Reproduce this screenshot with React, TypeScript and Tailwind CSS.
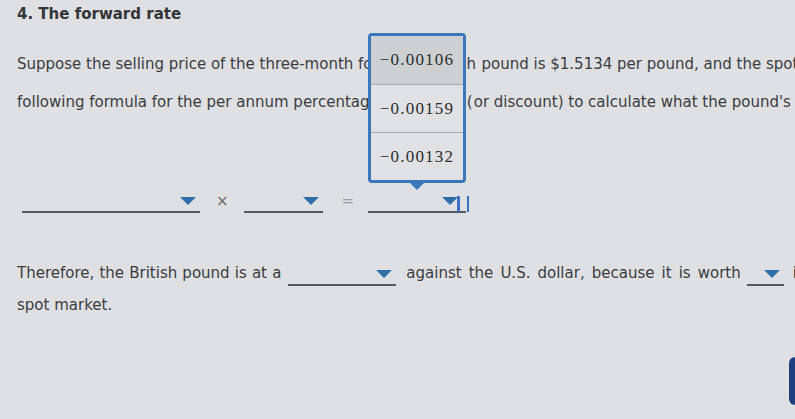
import React from "react";

const Caret = () => (
  <span className="inline-block h-0 w-0 border-x-[8px] border-t-[8px] border-x-transparent border-t-[#2f6ea8]" />
);

const Blank: React.FC<{ width: string; pad?: string }> = ({ width, pad = "pr-[4px]" }) => (
  <span className={`inline-flex h-[22px] shrink-0 items-center justify-end border-b-2 border-[#555a60] ${pad} ${width}`}>
    <Caret />
  </span>
);

const options = ["\u22120.00106", "\u22120.00159", "\u22120.00132"];

const App: React.FC = () => {
  return (
    <div className="relative flex h-[419px] w-[795px] flex-col overflow-hidden bg-[#dee0e3] font-['DejaVu_Sans',sans-serif] text-[15px] text-[#3a3c3f]">
      <h2 className="pl-[17px] pt-[4px] text-[15px] font-bold leading-[20px] text-[#333538]">
        4. The forward rate
      </h2>

      <div className="mt-[21px] whitespace-nowrap pl-[17px] leading-[38px]">
        <p>
          Suppose the selling price of the three-month f<span className="tracking-[0.6px]">orward British</span> pound is $1.5134 per pound, and the spot rate is
        </p>
        <p>
          following formula for the per annum percentag<span className="tracking-[1.1px]">e premium (</span>or discount) to calculate what the pound's forward
        </p>
      </div>

      <div className="mt-[70px] flex items-end pl-[22px]">
        <Blank width="w-[178px]" />
        <span className="ml-[16px] mr-[15px] mb-[2px] leading-[20px] text-[#6a6c70]">×</span>
        <Blank width="w-[79px]" />
        <span className="ml-[19px] mr-[14px] mb-[2px] leading-[20px] text-[#9a9ca0]">=</span>
        <Blank width="w-[98px]" pad="pr-[8px]" />
      </div>

      <div className="mt-[47px] flex h-[26px] items-end whitespace-nowrap pl-[17px] leading-[22px]">
        <span className="mb-[2px] [word-spacing:0.4px]">Therefore, the British pound is at a</span>
        <span className="ml-[7px]">
          <Blank width="w-[108px]" />
        </span>
        <span className="mb-[2px] ml-[10px] [word-spacing:2.3px]">against the U.S. dollar, because it is worth</span>
        <span className="ml-[6px]">
          <Blank width="w-[37px]" />
        </span>
        <span className="mb-[2px] ml-[9px]">in the</span>
      </div>
      <p className="mt-[8px] pl-[17px] leading-[22px]">spot market.</p>

      <div className="mt-[41px] flex justify-end">
        <button className="mr-[-54px] h-[48px] w-[60px] rounded-[6px] bg-[#1e3f7e]" />
      </div>

      {/* open dropdown over the third blank */}
      <div className="absolute left-[368px] top-[33px] w-[98px] rounded-[4px] border-[3px] border-[#3b78b9] bg-[#dfe1e4] font-['Liberation_Serif',serif] text-[17px] tracking-[1.2px] text-[#2a2c2e]">
        {options.map((o, i) => (
          <div
            key={o}
            className={`flex h-[48px] items-center justify-center ${
              i === 0 ? "bg-[#cdd0d3]" : "border-t border-[#a9adb2]"
            }`}
          >
            {o}
          </div>
        ))}
        <span className="absolute -bottom-[10px] left-1/2 h-0 w-0 -translate-x-1/2 border-x-[8px] border-t-[8px] border-x-transparent border-t-[#3b78b9]" />
      </div>

      {/* text cursor */}
      <div className="absolute left-[457px] top-[196px] flex gap-[7px]">
        <span className="h-[16px] w-[3px] bg-[#3d6fc2]" />
        <span className="h-[16px] w-[2px] bg-[#3d6fc2]" />
      </div>
    </div>
  );
};

export default App;
